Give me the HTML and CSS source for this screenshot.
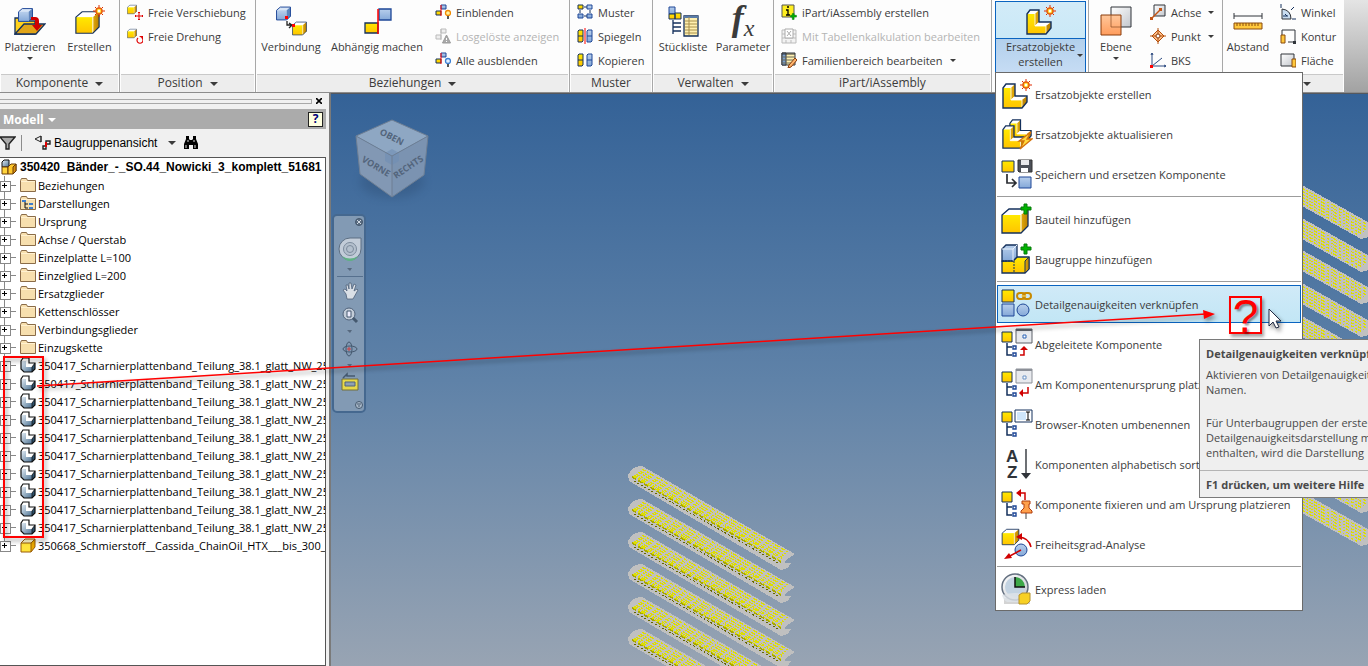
FILE: index.html
```html
<!DOCTYPE html>
<html lang="de">
<head>
    <meta charset="UTF-8">
    <meta name="viewport" content="width=device-width, initial-scale=1.0">
    <title>Modell - Baugruppenansicht</title>
    <link rel="stylesheet" href="styles.css">
</head>
<body>

    <!-- Symbole -->
    <svg class="sprite" aria-hidden="true">
        <defs>
            <linearGradient id="gold" x1="0" y1="0" x2="0" y2="1"><stop offset="0" stop-color="#ffe900"/><stop offset="1" stop-color="#ffc400"/></linearGradient>
            <linearGradient id="side" x1="0" y1="0" x2="1" y2="0"><stop offset="0" stop-color="#e2a90a"/><stop offset="1" stop-color="#b98000"/></linearGradient>
            <linearGradient id="blue" x1="0" y1="0" x2="0" y2="1"><stop offset="0" stop-color="#b8cfec"/><stop offset="1" stop-color="#84a8d8"/></linearGradient>
            <linearGradient id="steel" x1="0" y1="0" x2="1" y2="1"><stop offset="0" stop-color="#e4edf5"/><stop offset="1" stop-color="#4d7394"/></linearGradient>
            <linearGradient id="orange" x1="0" y1="0" x2="0" y2="1"><stop offset="0" stop-color="#ffc79b"/><stop offset="1" stop-color="#ff9c5c"/></linearGradient>
            <linearGradient id="grey" x1="0" y1="0" x2="1" y2="1"><stop offset="0" stop-color="#fff"/><stop offset="1" stop-color="#c2c6cc"/></linearGradient>
        </defs>
        <symbol id="spark" viewBox="0 0 12 12">
            <path d="M6 0v12M0 6h12M2 2l8 8M10 2l-8 8" stroke="#e02a00" stroke-width="1"/>
            <circle cx="6" cy="6" r="3" fill="#ffe23c" stroke="#e8600a" stroke-width="1.5"/>
            <circle cx="6" cy="6" r="1.2" fill="#fff"/>
        </symbol>
        <symbol id="box" viewBox="0 0 28 28">
            <path d="M1 8l7-6h19v17l-7 7H1z" fill="#fff"/>
            <path d="M1 8h19v18H1z" fill="url(#gold)"/>
            <path d="M20 8l7-6v17l-7 7z" fill="url(#side)"/>
            <path d="M20 8v18" stroke="#fff"/>
            <path d="M1 8l7-6h19v17l-7 7H1z" fill="none" stroke="#14305c" stroke-width="1.3"/>
        </symbol>
        <symbol id="bluebox" viewBox="0 0 28 28">
            <path d="M1 8l7-6h19v17l-7 7H1z" fill="#d8e5f6"/>
            <path d="M1 8h19v18H1z" fill="url(#blue)"/>
            <path d="M20 8l7-6v17l-7 7z" fill="#5f86be"/>
            <path d="M1 8l7-6h19v17l-7 7H1z" fill="none" stroke="#1e4797" stroke-width="1.8"/>
        </symbol>
        <symbol id="ell" viewBox="0 0 26 26">
            <path d="M1 5l3-4h9v12h12v6l-5 6H1z" fill="#fff"/>
            <path d="M1 5h8v12h11v8H1z" fill="url(#gold)"/>
            <path d="M9 5l4-4v12l-4 4zM20 17l5-4v6l-5 6z" fill="url(#side)"/>
            <path d="M9 5v12h11v8M9 17l4-4" fill="none" stroke="#fff" stroke-width=".8"/>
            <path d="M1 5l3-4h9v12h12v6l-5 6H1z" fill="none" stroke="#14305c" stroke-width="1.4"/>
        </symbol>
        <symbol id="i-place" viewBox="0 0 32 32">
            <path d="M1 13h9l3 3h8v13H1z" fill="#ffd21c" stroke="#14305c" stroke-width="1.3"/>
            <path d="M1 29l9-10h21l-9 10z" fill="#e0a418" stroke="#14305c" stroke-width="1.3"/>
            <use href="#bluebox" x="4" y="2" width="15" height="16"/>
            <path d="M17 12h4q4 0 4 4v4h3l-5 6-5-6h3v-5h-4z" fill="#d00000"/>
        </symbol>
        <symbol id="i-create" viewBox="0 0 32 32">
            <use href="#box" x="1" y="5" width="25" height="25"/>
            <use href="#spark" x="19" y="0" width="12" height="12"/>
        </symbol>
        <symbol id="i-joint" viewBox="0 0 32 32">
            <use href="#bluebox" x="1" y="1" width="15" height="15"/>
            <use href="#box" x="17" y="16" width="15" height="15"/>
            <path d="M12 16v4h4M14 18l3 2-3 3" fill="none" stroke="#222" stroke-width="1.3"/>
            <path d="M10 11h3v3h-3zM17 19h3v3h-3z" fill="#f00"/>
        </symbol>
        <symbol id="i-constrain" viewBox="0 0 32 32">
            <path d="M18 4h12v11H18z" fill="url(#blue)" stroke="#1e4797" stroke-width="1.3"/>
            <path d="M4 18h13v10H4z" fill="url(#gold)" stroke="#14305c" stroke-width="1.3"/>
            <path d="M17 4v25" stroke="#f00" stroke-width="1.5"/>
        </symbol>
        <symbol id="i-bom" viewBox="0 0 32 32">
            <path d="M2 2h6v7H2z" fill="url(#blue)" stroke="#1e4797"/>
            <path d="M2 9h6v5H2zM8 8h6v6H8z" fill="url(#gold)" stroke="#14305c"/>
            <path d="M6 15v14M6 18h8M6 22h8M6 26h8" stroke="#14305c" stroke-width="1.3"/>
            <path d="M17 11h14v20H17z" fill="#fff0b0" stroke="#14305c" stroke-width="1.3"/>
            <path d="M17 12h14" stroke="#5a7ca8" stroke-width="2"/>
            <path d="M18 16h12M18 19h12M18 22h12M18 25h12M18 28h12M22 12v18" stroke="#a8904c"/>
        </symbol>
        <symbol id="i-sub" viewBox="0 0 32 32">
            <use href="#ell" x="1" y="5" width="26" height="26"/>
            <use href="#spark" x="19" y="1" width="12" height="12"/>
        </symbol>
        <symbol id="i-subup" viewBox="0 0 32 32">
            <use href="#ell" x="8" y="1" width="23" height="23"/>
            <use href="#ell" x="1" y="7" width="24" height="24"/>
            <path d="M30 14l-12 9h5l-4 8 12-10h-5z" fill="#ffd93c" stroke="#d4720c" stroke-width="1.3"/>
        </symbol>
        <symbol id="i-savereplace" viewBox="0 0 32 32">
            <path d="M1 3h12v11H1z" fill="url(#gold)" stroke="#14305c"/>
            <path d="M17 2h14v12H18l-1-1z" fill="#4c5058" stroke="#333"/>
            <path d="M20 2h8v5h-8z" fill="#e8e8ea"/><path d="M20 10h7v4h-7z" fill="#fff"/>
            <path d="M6 16v9h9M11 21l4 4-4 4" fill="none" stroke="#2b2e33" stroke-width="1.7"/>
            <path d="M18 19h12v11H18z" fill="url(#blue)" stroke="#1e4797"/>
        </symbol>
        <symbol id="plus" viewBox="0 0 12 12"><path d="M4 1h3v3h4v3H7v4H4V7H1V4h3z" fill="#00b400" stroke="#067a0a"/></symbol>
        <symbol id="i-addpart" viewBox="0 0 32 32">
            <use href="#box" x="0" y="4" width="28" height="28"/>
            <use href="#plus" x="19" y="0" width="12" height="12"/>
        </symbol>
        <symbol id="i-addasm" viewBox="0 0 32 32">
            <path d="M13 17l3-3h12v12l-4 4H1V18z" fill="url(#gold)" stroke="#14305c" stroke-width="1.3"/>
            <path d="M24 18l4-4v12l-4 4z" fill="url(#side)" stroke="#14305c"/>
            <path d="M1 6l4-4h11v12l-4 4H1z" fill="url(#blue)" stroke="#14305c" stroke-width="1.3"/>
            <path d="M1 6h11v12M12 6l4-4" stroke="#e8f0fa" fill="none"/>
            <path d="M1 18h12v12" stroke="#14305c" stroke-dasharray="2 1" fill="none"/>
            <use href="#plus" x="19" y="0" width="12" height="12"/>
        </symbol>
        <symbol id="i-linklod" viewBox="0 0 32 32">
            <path d="M1 2h12v12H1z" fill="url(#gold)" stroke="#14305c"/>
            <path d="M1 16h12v12H1z" fill="url(#blue)" stroke="#1e4797"/>
            <circle cx="22" cy="22" r="6" fill="url(#blue)" stroke="#1e4797"/>
            <rect x="16" y="5" width="8" height="6" rx="3" fill="none" stroke="#c88a00" stroke-width="2"/>
            <rect x="22" y="5" width="8" height="6" rx="3" fill="none" stroke="#c88a00" stroke-width="2"/>
            <path d="M20 8h6" stroke="#ffe27a"/>
        </symbol>
        <symbol id="treebase" viewBox="0 0 32 32">
            <path d="M1 4h10v10H1z" fill="url(#gold)" stroke="#14305c"/>
            <path d="M6 15v12h5M6 19h5" fill="none" stroke="#14305c" stroke-width="1.5"/>
            <path d="M12 18h3v3h-3zM12 25h3v3h-3z" fill="#fff" stroke="#1e4797" stroke-width="1.4"/>
        </symbol>
        <symbol id="i-derived" viewBox="0 0 32 32">
            <use href="#treebase" width="32" height="32"/>
            <path d="M15 1h16v14H15z" fill="#e8eaee" stroke="#5c6068"/><path d="M15 2h16" stroke="#5c6068" stroke-width="2"/>
            <path d="M22 7h3v3h-3z" fill="#fff" stroke="#2a62b4"/>
            <path d="M19 27h4v-8" fill="none" stroke="#d00000" stroke-width="1.5"/><path d="M19 22l4-4 4 4z" fill="#d00000"/>
        </symbol>
        <symbol id="i-origin" viewBox="0 0 32 32">
            <use href="#treebase" width="32" height="32"/>
            <path d="M15 1h16v14H15z" fill="#e8eaee" stroke="#8c9098"/><path d="M15 2h16" stroke="#8c9098" stroke-width="2"/>
            <path d="M22 8h3v3h-3z" fill="#fff" stroke="#6a92c4"/>
            <path d="M27 19v6h-8" fill="none" stroke="#d00000" stroke-width="1.5"/><path d="M22 21v8l-4-4z" fill="#d00000"/>
        </symbol>
        <symbol id="i-rename" viewBox="0 0 32 32">
            <use href="#treebase" width="32" height="32"/>
            <path d="M14 2h17v12H14z" fill="#fff" stroke="#14305c"/><path d="M16 4h9v8h-9z" fill="#cfe6fa"/>
            <path d="M25 4h4M27 4v8M25 12h4" stroke="#000"/>
        </symbol>
        <symbol id="i-pin" viewBox="0 0 32 32">
            <use href="#treebase" width="32" height="32"/>
            <path d="M24 12V5h-6" fill="none" stroke="#d00000" stroke-width="1.5"/><path d="M20 1v8l-5-4z" fill="#d00000"/>
            <path d="M21 13h8v3h-1v4l3 3v2H20v-2l3-3v-4h-2z" fill="#ffa04c" stroke="#b03c0c"/><path d="M25 25v6" stroke="#444"/>
        </symbol>
        <symbol id="i-sort" viewBox="0 0 32 32">
            <path d="M25 1v25" stroke="#30343a" stroke-width="1.4"/><path d="M20 25h10l-5 6z" fill="#30343a"/>
        </symbol>
        <symbol id="i-dof" viewBox="0 0 32 32">
            <use href="#box" x="0" y="0" width="19" height="18"/>
            <circle cx="20" cy="22" r="6" fill="url(#blue)" stroke="#1e4797"/>
            <path d="M30 19q-2-9-12-10" fill="none" stroke="#d00000" stroke-width="1.5"/><path d="M21 5l-6 4 6 3z" fill="#d00000"/>
            <path d="M20 22L7 29" stroke="#d00000" stroke-width="1.5"/><path d="M8 25l3 5-8 1z" fill="#d00000"/>
        </symbol>
        <symbol id="i-express" viewBox="0 0 32 32">
            <path d="M3 25h26v6H3z" fill="#d4d4d4"/>
            <circle cx="14" cy="14" r="13" fill="url(#grey)" stroke="#647080" stroke-width="1.5"/>
            <circle cx="14" cy="14" r="10" fill="#c3d3e2"/>
            <path d="M14 14V4a10 10 0 0 1 10 10z" fill="#3ca848"/>
            <path d="M14 4v10h10" fill="none" stroke="#111" stroke-width="1.5"/>
            <path d="M1 22q13-4 26 0v7H6q-4-2-5-7z" fill="#dfe3e8" opacity=".8"/>
            <path d="M18 22l3-2h8v8l-3 3h-8z" fill="#f7d024" stroke="#b4922c"/>
        </symbol>
        <symbol id="i-plane" viewBox="0 0 32 32">
            <path d="M11 2h20v20H11z" fill="url(#grey)" stroke="#30343a"/>
            <path d="M1 10h20v20H1z" fill="url(#orange)" stroke="#8a3c0c"/>
            <path d="M11 10v12h10" fill="none" stroke="#8a4a24" opacity=".7"/>
        </symbol>
        <symbol id="i-ruler" viewBox="0 0 32 32">
            <path d="M2 11h28M2 8v6M30 8v6" stroke="#30343a" fill="none"/>
            <path d="M2 18h28v6H2z" fill="#ffc83c" stroke="#8a4a0c"/>
            <path d="M5 18v3M8 18v3M11 18v3M14 18v3M17 18v3M20 18v3M23 18v3M26 18v3" stroke="#8a4a0c"/>
        </symbol>
        <symbol id="s-move" viewBox="0 0 16 16">
            <use href="#box" width="10" height="11"/>
            <path d="M12 8v8M8 12h8M11 9l1-1 1 1M11 15l1 1 1-1M9 11l-1 1 1 1M15 11l1 1-1 1" fill="none" stroke="#e00000"/>
        </symbol>
        <symbol id="s-rotate" viewBox="0 0 16 16">
            <use href="#box" width="10" height="11"/>
            <path d="M11 10a3 3 0 1 0 4 0" fill="none" stroke="#e00000" stroke-width="1.2"/><path d="M12 8h4v3z" fill="#e00000"/>
        </symbol>
        <symbol id="flags" viewBox="0 0 16 16">
            <path d="M6 1h5v4H6z" fill="url(#blue)" stroke="#1e4797"/><path d="M1 7h5v4H1z" fill="url(#gold)" stroke="#14305c"/>
            <path d="M6 1v11" stroke="#f00"/>
        </symbol>
        <symbol id="s-show" viewBox="0 0 16 16"><use href="#flags" width="16" height="16"/><circle cx="13" cy="9" r="2.5" fill="#fff2a0" stroke="#f08a00" stroke-width="1.3"/><path d="M12 12h2v3h-2z" fill="#555"/></symbol>
        <symbol id="s-hide" viewBox="0 0 16 16"><use href="#flags" width="16" height="16"/><circle cx="13" cy="9" r="2.5" fill="#e4f0ff" stroke="#3c80d4" stroke-width="1.3"/><path d="M12 12h2v3h-2z" fill="#555"/></symbol>
        <symbol id="s-sick" viewBox="0 0 16 16"><path d="M6 1h5v4H6zM1 7h5v4H1zM6 1v11" fill="#eee" stroke="#bbb"/><path d="M11.500 7l4 8h-8z" fill="#aaa" stroke="#999"/><path d="M11.500 10v2M11.500 13v1" stroke="#fff"/></symbol>
        <symbol id="s-pattern" viewBox="0 0 16 16">
            <path d="M1 1h5v4H1z" fill="url(#gold)" stroke="#14305c"/>
            <path d="M10 1h5v4h-5zM1 10h5v4H1zM10 10h5v4h-5z" fill="url(#blue)" stroke="#1e4797"/><path d="M7 3h3M3 6v3M7 12h3M13 6v3" stroke="#14305c"/>
        </symbol>
        <symbol id="s-copy" viewBox="0 0 16 16">
            <path d="M1 3l1-1h4v11l-1 1H1zM1 8h5" fill="url(#gold)" stroke="#14305c"/>
            <path d="M10 3l1-1h4v11l-1 1h-4zM10 8h5" fill="url(#blue)" stroke="#1e4797"/>
        </symbol>
        <symbol id="s-mirror" viewBox="0 0 16 16"><use href="#s-copy" width="16" height="16"/><path d="M8 0v16" stroke="#f00"/></symbol>
        <symbol id="s-ipart" viewBox="0 0 16 16">
            <path d="M1 1h12v12H1z" fill="#ffee20" stroke="#555"/><path d="M5 6h2v5M5 11h4M6 3h2" stroke="#000" fill="none" stroke-width="1.3"/>
            <use href="#plus" x="9" y="9" width="7" height="7"/>
        </symbol>
        <symbol id="s-sheet" viewBox="0 0 16 16">
            <path d="M1 2h14v13H1zM1 6h14M1 10h14M5 12v3M10 12v3" fill="#f2f2f2" stroke="#bbb"/><path d="M4 1h8v9H4z" fill="#fff" stroke="#aaa"/><path d="M6 3l4 5M10 3L6 8" stroke="#aaa"/>
        </symbol>
        <symbol id="s-family" viewBox="0 0 16 16">
            <path d="M1 1h13v12H1z" fill="#fff0b0" stroke="#30343a"/><path d="M1 1h4v12H1zM1 2h13" fill="#7ca0cc" stroke="#30343a"/>
            <path d="M1 5h13M1 8h13M1 11h13" stroke="#686858"/><path d="M14 6l2 2-6 7-3 1 1-3z" fill="#ffb46c" stroke="#8a3c0c"/>
        </symbol>
        <symbol id="s-axis" viewBox="0 0 16 16"><path d="M4 1h11v11H4z" fill="url(#grey)" stroke="#30343a"/><path d="M1 15L11 5" stroke="#c45414" stroke-width="1.5"/><path d="M0 13h3v3H0zM9 4h3v3H9z" fill="#c45414"/></symbol>
        <symbol id="s-point" viewBox="0 0 16 16"><path d="M8 2l6 6-6 6-6-6z" fill="#ffc08c" stroke="#b4500c"/><path d="M8 0v16M0 8h16" stroke="#b4500c"/><circle cx="8" cy="8" r="2" fill="#fff" stroke="#8a3c0c"/></symbol>
        <symbol id="s-ucs" viewBox="0 0 16 16"><path d="M2 1v13h14M2 14L12 6M1 3l1-2 1 2M14 13l2 1-2 1" fill="none" stroke="#2c4a80"/><path d="M0 13h3v3H0z" fill="#f00"/></symbol>
        <symbol id="s-angle" viewBox="0 0 16 16"><path d="M2 15V5q9 1 9 10z" fill="#c8dcf0" stroke="#30343a"/><path d="M1 0v4M5 10l2 2M11 6l3-3M12 15h4M3 12h5" stroke="#14305c"/></symbol>
        <symbol id="s-loop" viewBox="0 0 16 16"><path d="M2 8V2h13v12H8" fill="none" stroke="#30343a"/><path d="M1 7h4v8H1z" fill="#ffc83c" stroke="#8a4a0c"/><path d="M13 13h3v3h-3z" fill="#30343a"/></symbol>
        <symbol id="s-area" viewBox="0 0 16 16"><path d="M1 2h13v12H1z" fill="url(#grey)" stroke="#30343a"/><path d="M12 7h4v8h-4z" fill="#ffc83c" stroke="#8a4a0c"/></symbol>
        <symbol id="t-folder" viewBox="0 0 16 16"><path d="M.5 3.500l1-2h5l1 2h8v11H.5z" fill="#f7dfae" stroke="#8a6c48"/><path d="M1 4.500h14" stroke="#fff1d0"/></symbol>
        <symbol id="t-repr" viewBox="0 0 16 16"><use href="#t-folder" width="16" height="16"/><path d="M2 5h4v2H2zM9 8h4v2H9zM9 12h4v2H9z" fill="#3c7ccc"/><path d="M5 7v6h3M5 9h3" stroke="#111" fill="none"/></symbol>
        <symbol id="t-part" viewBox="0 0 16 16">
            <path d="M1 4l2-3h5l1 1v4h6v6l-3 3H4l-3-3z" fill="#fff"/>
            <path d="M1 4h5v6h6v5H4l-3-3z" fill="url(#steel)"/><path d="M12 10l3-4v6l-3 3z" fill="#2c506c"/>
            <path d="M1 4l2-3h6v5h6v6l-3 3H4l-3-3z" fill="none" stroke="#111" stroke-width="1.2"/>
            <path d="M12 10v5M12 10l3-4" stroke="#111" stroke-width=".8"/>
        </symbol>
        <symbol id="t-box" viewBox="0 0 16 16"><path d="M1 6l4-4h10v8l-4 5H1z" fill="#fff7c8"/><path d="M1 6h10v9H1z" fill="#ffe43c"/><path d="M11 6l4-4v8l-4 5z" fill="#e8a800"/><path d="M1 6l4-4h10v8l-4 5H1zM1 6h10v9M11 6l4-4" fill="none" stroke="#9a5c08"/></symbol>
        <symbol id="t-asm" viewBox="0 0 16 16">
            <path d="M1 3l2-2h5v6l-1 1H1z" fill="url(#steel)" stroke="#111"/>
            <path d="M1 8h6v7H1z" fill="#ffd43c" stroke="#6a3c08"/><path d="M7 8l3-3h5v7l-3 3H7z" fill="#ffc82c" stroke="#6a3c08"/><path d="M12 8l3-3v7l-3 3z" fill="#d48c10" stroke="#6a3c08"/>
        </symbol>
    </svg>

    <header class="ribbon">
        <section class="panel komponente">
            <div class="panel-body">
                <button class="big"><svg><use href="#i-place"/></svg>Platzieren<i class="arrow small-arrow"></i></button>
                <button class="big"><svg><use href="#i-create"/></svg>Erstellen</button>
            </div>
            <div class="panel-title">Komponente<i class="arrow"></i></div>
        </section>
        <section class="panel position">
            <div class="panel-body">
                <div class="stack">
                    <button class="small"><svg><use href="#s-move"/></svg>Freie Verschiebung</button>
                    <button class="small"><svg><use href="#s-rotate"/></svg>Freie Drehung</button>
                </div>
            </div>
            <div class="panel-title">Position<i class="arrow"></i></div>
        </section>
        <section class="panel beziehungen">
            <div class="panel-body">
                <button class="big"><svg><use href="#i-joint"/></svg>Verbindung</button>
                <button class="big"><svg><use href="#i-constrain"/></svg>Abhängig machen</button>
                <div class="stack">
                    <button class="small"><svg><use href="#s-show"/></svg>Einblenden</button>
                    <button class="small" disabled><svg><use href="#s-sick"/></svg>Losgelöste anzeigen</button>
                    <button class="small"><svg><use href="#s-hide"/></svg>Alle ausblenden</button>
                </div>
            </div>
            <div class="panel-title">Beziehungen<i class="arrow"></i></div>
        </section>
        <section class="panel muster">
            <div class="panel-body">
                <div class="stack">
                    <button class="small"><svg><use href="#s-pattern"/></svg>Muster</button>
                    <button class="small"><svg><use href="#s-mirror"/></svg>Spiegeln</button>
                    <button class="small"><svg><use href="#s-copy"/></svg>Kopieren</button>
                </div>
            </div>
            <div class="panel-title">Muster</div>
        </section>
        <section class="panel verwalten">
            <div class="panel-body">
                <button class="big"><svg><use href="#i-bom"/></svg>Stückliste</button>
                <button class="big"><span class="fx">f<sub>x</sub></span>Parameter</button>
            </div>
            <div class="panel-title">Verwalten<i class="arrow"></i></div>
        </section>
        <section class="panel ipart">
            <div class="panel-body">
                <div class="stack">
                    <button class="small"><svg><use href="#s-ipart"/></svg>iPart/iAssembly erstellen</button>
                    <button class="small" disabled><svg><use href="#s-sheet"/></svg>Mit Tabellenkalkulation bearbeiten</button>
                    <button class="small"><svg><use href="#s-family"/></svg>Familienbereich bearbeiten<i class="arrow small-arrow"></i></button>
                </div>
            </div>
            <div class="panel-title">iPart/iAssembly</div>
        </section>
        <section class="panel ersatz">
            <button class="split" aria-expanded="true">
                <svg><use href="#i-sub"/></svg>
                <span>Ersatzobjekte<br>erstellen<i class="arrow small-arrow"></i></span>
            </button>

            <div class="menu" role="menu">
                <button role="menuitem"><svg><use href="#i-sub"/></svg>Ersatzobjekte erstellen</button>
                <button role="menuitem"><svg><use href="#i-subup"/></svg>Ersatzobjekte aktualisieren</button>
                <button role="menuitem"><svg><use href="#i-savereplace"/></svg>Speichern und ersetzen Komponente</button>
                <hr>
                <button role="menuitem"><svg><use href="#i-addpart"/></svg>Bauteil hinzufügen</button>
                <button role="menuitem"><svg><use href="#i-addasm"/></svg>Baugruppe hinzufügen</button>
                <hr>
                <button role="menuitem" class="active"><svg><use href="#i-linklod"/></svg>Detailgenauigkeiten verknüpfen</button>
                <button role="menuitem"><svg><use href="#i-derived"/></svg>Abgeleitete Komponente</button>
                <button role="menuitem"><svg><use href="#i-origin"/></svg>Am Komponentenursprung platzieren</button>
                <button role="menuitem"><svg><use href="#i-rename"/></svg>Browser-Knoten umbenennen</button>
                <button role="menuitem"><svg viewBox="0 0 32 32"><text x="5" y="14" class="az">A</text><text x="6" y="30" class="az">Z</text><use href="#i-sort" width="32" height="32"/></svg>Komponenten alphabetisch sortieren</button>
                <button role="menuitem"><svg><use href="#i-pin"/></svg>Komponente fixieren und am Ursprung platzieren</button>
                <button role="menuitem"><svg><use href="#i-dof"/></svg>Freiheitsgrad-Analyse</button>
                <hr>
                <button role="menuitem"><svg><use href="#i-express"/></svg>Express laden</button>
            </div>
        </section>
        <section class="panel ebene">
            <div class="panel-body">
                <button class="big"><svg><use href="#i-plane"/></svg>Ebene<i class="arrow small-arrow"></i></button>
                <div class="stack">
                    <button class="small"><svg><use href="#s-axis"/></svg>Achse<i class="arrow small-arrow"></i></button>
                    <button class="small"><svg><use href="#s-point"/></svg>Punkt<i class="arrow small-arrow"></i></button>
                    <button class="small"><svg><use href="#s-ucs"/></svg>BKS</button>
                </div>
            </div>
            <div class="panel-title"></div>
        </section>
        <section class="panel messen">
            <div class="panel-body">
                <button class="big"><svg><use href="#i-ruler"/></svg>Abstand</button>
                <div class="stack">
                    <button class="small"><svg><use href="#s-angle"/></svg>Winkel</button>
                    <button class="small"><svg><use href="#s-loop"/></svg>Kontur</button>
                    <button class="small"><svg><use href="#s-area"/></svg>Fläche</button>
                </div>
            </div>
            <div class="panel-title"><i class="arrow"></i></div>
        </section>
    </header>

    <main>
        <aside class="browser">
            <div class="grip"><span></span><button aria-label="Schließen"><svg viewBox="0 0 6 6"><path d="M0 0l6 6M6 0L0 6" stroke="#000" stroke-width="1.6"/></svg></button></div>
            <div class="browser-head">
                <span>Modell<i class="arrow"></i></span>
                <button aria-label="Hilfe">?</button>
            </div>
            <div class="browser-tools">
                <svg viewBox="0 0 16 16"><path d="M0 2h15L9 9v5H6V9z" fill="#aaa" stroke="#222" stroke-width="1.4"/></svg>
                <button class="view">
                    <svg viewBox="0 0 16 16"><path d="M0 4l6-3v6zM6 1v6" fill="none" stroke="#222"/><path d="M8 11h3v3H8zM11 6h4v3h-4z" fill="none" stroke="#222" stroke-width="1.4"/><path d="M11 7v5" stroke="#e00000" stroke-width="2"/></svg>
                    Baugruppenansicht<i class="arrow"></i>
                </button>
                <svg viewBox="0 0 16 16"><path d="M3 1h3v3l1 1h2l1-1V1h3v3l2 5v5h-5v-4H6v4H1V9l2-5z" fill="#000"/><path d="M3 10v3M12 10v3M5 5v2M11 5v2" stroke="#ddd"/></svg>
            </div>
            <ul class="tree">
                <li class="root"><svg><use href="#t-asm"/></svg>350420_Bänder_-_SO.44_Nowicki_3_komplett_51681</li>
                <li><svg><use href="#t-folder"/></svg>Beziehungen</li>
                <li><svg><use href="#t-repr"/></svg>Darstellungen</li>
                <li><svg><use href="#t-folder"/></svg>Ursprung</li>
                <li><svg><use href="#t-folder"/></svg>Achse / Querstab</li>
                <li><svg><use href="#t-folder"/></svg>Einzelplatte L=100</li>
                <li><svg><use href="#t-folder"/></svg>Einzelglied L=200</li>
                <li><svg><use href="#t-folder"/></svg>Ersatzglieder</li>
                <li><svg><use href="#t-folder"/></svg>Kettenschlösser</li>
                <li><svg><use href="#t-folder"/></svg>Verbindungsglieder</li>
                <li><svg><use href="#t-folder"/></svg>Einzugskette</li>
                <li><svg><use href="#t-part"/></svg>350417_Scharnierplattenband_Teilung_38.1_glatt_NW_250</li>
                <li><svg><use href="#t-part"/></svg>350417_Scharnierplattenband_Teilung_38.1_glatt_NW_250</li>
                <li><svg><use href="#t-part"/></svg>350417_Scharnierplattenband_Teilung_38.1_glatt_NW_250</li>
                <li><svg><use href="#t-part"/></svg>350417_Scharnierplattenband_Teilung_38.1_glatt_NW_250</li>
                <li><svg><use href="#t-part"/></svg>350417_Scharnierplattenband_Teilung_38.1_glatt_NW_250</li>
                <li><svg><use href="#t-part"/></svg>350417_Scharnierplattenband_Teilung_38.1_glatt_NW_250</li>
                <li><svg><use href="#t-part"/></svg>350417_Scharnierplattenband_Teilung_38.1_glatt_NW_250</li>
                <li><svg><use href="#t-part"/></svg>350417_Scharnierplattenband_Teilung_38.1_glatt_NW_250</li>
                <li><svg><use href="#t-part"/></svg>350417_Scharnierplattenband_Teilung_38.1_glatt_NW_250</li>
                <li><svg><use href="#t-part"/></svg>350417_Scharnierplattenband_Teilung_38.1_glatt_NW_250</li>
                <li><svg><use href="#t-box"/></svg>350668_Schmierstoff__Cassida_ChainOil_HTX___bis_300_C</li>
            </ul>
        </aside>

        <div class="viewport">
            <!-- Scharnierplatten -->
            <svg class="scene" viewBox="331 94 1038 573">
                <defs>
                    <g id="plate">
                        <path d="M0 9l4-6 7-3h3l153 88-9 6-1 3h6l-3 5-7 2L1 15z" fill="#c0c0c0"/>
                        <path d="M14 3l146 83M12 5l146 83M10 6l146 84M8 8l147 84M6 9l148 84M5 10l148 85" stroke="#dede00" stroke-width="1.2" stroke-dasharray="4 2 2 1 5 2" fill="none"/>
                        <path d="M4 11l149 85" stroke="#a8a800" stroke-width="1.5" stroke-dasharray="5 2"/>
                        <path d="M6 15l146 83" stroke="#666600" stroke-dasharray="2 2"/>
                    </g>
                    <g id="plate-end">
                        <path d="M0 0l80 45v4l-21 5L0 21z" fill="#c0c0c0"/>
                        <path d="M0 3l68 38M0 6l66 37M0 9l64 36M0 12l62 35M0 15l60 34M0 18l56 32" stroke="#dede00" stroke-width="1.2" stroke-dasharray="3 2 2 1 4 2" fill="none"/>
                    </g>
                </defs>
                <use href="#plate" x="628" y="466"/>
                <use href="#plate" x="628" y="499"/>
                <use href="#plate" x="628" y="532"/>
                <use href="#plate" x="628" y="564"/>
                <use href="#plate" x="628" y="597"/>
                <use href="#plate" x="628" y="629"/>
                <use href="#plate-end" x="1302" y="185"/>
                <use href="#plate-end" x="1302" y="218"/>
                <use href="#plate-end" x="1302" y="250"/>
                <use href="#plate-end" x="1302" y="283"/>
                <use href="#plate-end" x="1302" y="316"/>
                <use href="#plate-end" x="1302" y="459"/>
                <use href="#plate-end" x="1302" y="492"/>
            </svg>

            <svg class="viewcube" viewBox="0 0 90 90">
                <ellipse cx="43" cy="66" rx="32" ry="16" fill="#28466a" opacity=".3" class="shade"/>
                <path d="M43 4l36 16-36 20L7 20z" fill="#8ea7c3"/>
                <path d="M7 20l36 20v41L11 58z" fill="#8298b4"/>
                <path d="M79 20L43 40v41l32-22z" fill="#7b93b1"/>
                <path d="M43 33l7 4v8l-7 4-7-4v-8z" fill="#6f8db4" opacity=".6"/>
                <path d="M43 4l36 16-4 39-32 22-32-23L7 20zM7 20l36 20 36-20M43 40v41" fill="none" stroke="#6e7f94"/>
                <g>
                    <text transform="rotate(27 30 18)" x="30" y="18">OBEN</text>
                    <text transform="rotate(31 12 45)" x="12" y="45">VORNE</text>
                    <text transform="rotate(-34 47 63)" x="47" y="63">RECHTS</text>
                </g>
            </svg>

            <div class="navbar">
                <svg viewBox="0 0 32 196">
                    <g fill="none" stroke="#45596f">
                        <circle cx="25" cy="6" r="3.500" fill="#5b6d81"/><path d="M23 4l4 4M27 4l-4 4" stroke="#cfd8e2"/>
                        <path d="M16 22h11v11a11 11 0 1 1-11-11z" fill="#c2ccd8" stroke="#5d6f83"/>
                        <path d="M8 40q8 5 16 0-3 5-8 5t-8-5z" fill="#60b284" stroke="none"/>
                        <circle cx="16" cy="33" r="6.500" fill="#b4c0cd" stroke="#7c8b9c"/><circle cx="16" cy="33" r="3.500" stroke="#7c8b9c"/>
                        <path d="M3 60.500h26" stroke="#56708e"/>
                        <path d="M12 78l-3-4 2-1 2 2-1-6h2l1 4v-6h2l1 6 2-5 2 1-2 6 3-2 1 1-5 9h-6z" fill="#d9dfe6" stroke="#50627a" stroke-width=".8"/>
                        <circle cx="15" cy="98" r="6" fill="#c2ccd8" stroke="#50627a"/><path d="M13 95h4v6h-4z" fill="#eef"/><path d="M19 102l4 4" stroke-width="3"/>
                        <ellipse cx="16" cy="133" rx="7" ry="3"/><ellipse cx="15" cy="133" rx="3" ry="7"/><path d="M13 133h4M15 131v4" stroke="#d04040"/>
                        <path d="M8 163h16v11H8z" fill="#e8d848" stroke="#736f3a"/><path d="M11 166h10v4H11z" fill="#8fa0b4" stroke="#50627a"/><path d="M9 162l4-4v2h8" stroke-width="1.5"/>
                        <circle cx="25" cy="189" r="3.500" fill="#a9b8c8"/><path d="M23 188h4M24 190h2"/>
                    </g>
                    <path d="M13 52h5l-2 3zM13 114h5l-2 3zM13 148h5l-2 3z" fill="#56687d"/>
                </svg>
            </div>
        </div>
    </main>

    <div class="tooltip" role="tooltip">
        <h2>Detailgenauigkeiten verknüpfen</h2>
        <p>Aktivieren von Detailgenauigkeiten<br>Namen.</p>
        <p>Für Unterbaugruppen der ersten<br>Detailgenauigkeitsdarstellung mit<br>enthalten, wird die Darstellung</p>
        <footer>F1 drücken, um weitere Hilfe</footer>
    </div>

    <!-- Markierungen -->
    <svg class="marks" viewBox="0 0 1368 666">
        <rect x="4" y="357" width="39" height="180" fill="none" stroke="#f00" stroke-width="2"/>
        <path d="M37 386L1206 314" stroke="#f00" stroke-width="1.5"/>
        <path d="M1203 310l12 4-11 5z" fill="#f00"/>
        <path d="M1269 309v17l4-4 3 6 3-1-3-6h5z" fill="#fff" stroke="#222b44"/>
    </svg>
    <div class="question">?</div>

</body>
</html>
```
FILE: styles.css
```css
* {
    box-sizing: border-box;
}
body {
    margin: 0;
    height: 100vh;
    display: flex;
    flex-direction: column;
    position: relative;
    overflow: hidden;
    font-family: "Open Sans", "Noto Sans", sans-serif;
    font-size: 11px;
    color: #3b3b3b;
    background: #f0f0f0;
}
button {
    font: inherit;
    color: inherit;
    background: none;
    border: none;
    padding: 0;
    white-space: nowrap;
}
.sprite {
    position: absolute;
    width: 0;
    height: 0;
}
.arrow {
    display: inline-block;
    border: 4px solid transparent;
    border-top-color: #3b3b3b;
    border-bottom: none;
    margin-left: 7px;
    vertical-align: middle;
}
.small-arrow {
    border-width: 3px;
    border-bottom: none;
}

/* Ribbon */
.ribbon {
    display: flex;
    flex: none;
    background: linear-gradient(#e4e4e4, #a2a2a2);
    border-bottom: 1px solid #8c8c8c;
    height: 93px;
}
.panel {
    flex: none;
    display: flex;
    flex-direction: column;
    background: #fdfdfd;
    border-right: 1px solid #a8a8a8;
}
.panel-body {
    flex: 1;
    display: grid;
}
.panel-title {
    height: 18px;
    line-height: 16px;
    margin: 0 1px;
    text-align: center;
    font-size: 12px;
    background: #ededed;
    border-top: 1px solid #c9c9c9;
}
.komponente { width: 120px; }
.position { width: 136px; }
.beziehungen { width: 314px; }
.muster { width: 83px; }
.verwalten { width: 121px; }
.ipart { width: 218px; }
.ersatz { width: 97px; }
.ebene { width: 134px; }
.messen { width: 121px; border-right: none; }
.komponente .panel-body,
.verwalten .panel-body { grid-template-columns: 60px 1fr; }
.beziehungen .panel-body { grid-template-columns: 70px 102px 1fr; }
.ebene .panel-body { grid-template-columns: 54px 1fr; }
.messen .panel-body { grid-template-columns: 50px 1fr; }
.messen .panel-title { text-align: right; padding-right: 32px; }

.big {
    display: flex;
    flex-direction: column;
    align-items: center;
    padding-top: 4px;
    line-height: 18px;
}
.big svg {
    width: 32px;
    height: 34px;
}
.big .arrow {
    margin: 1px 0 0;
}
.fx {
    height: 34px;
    font: italic bold 36px/28px "Liberation Serif", serif;
}
.fx sub {
    font-size: 24px;
    font-weight: normal;
    line-height: 0;
    vertical-align: -6px;
}
.stack {
    padding-left: 7px;
}
.small {
    display: flex;
    align-items: center;
    height: 24px;
}
.small svg {
    width: 16px;
    height: 16px;
    margin-right: 5px;
}
.small:disabled {
    color: #b4b4b4;
}
.ersatz {
    position: relative;
    padding: 1px 2px 0 3px;
}
.split {
    height: 72px;
    border: 1px solid #0a64c0;
    background: linear-gradient(#d2ebf8, #c3e7f6);
    display: flex;
    flex-direction: column;
    align-items: center;
}
.split svg {
    flex: none;
    width: 32px;
    height: 36px;
}
.split span {
    position: relative;
    align-self: stretch;
    flex: 1;
    line-height: 15px;
    border-top: 1px solid #0a64c0;
    background: linear-gradient(#b2d0ec, #c6dcf4);
}
.split .arrow {
    position: absolute;
    right: 2px;
    bottom: 15px;
}

/* Menü */
.menu {
    position: absolute;
    z-index: 2;
    left: 3px;
    top: 72px;
    width: 308px;
    padding: 1px;
    display: flex;
    flex-direction: column;
    background: #fff;
    border: 1px solid #6a6a6a;
}
.menu button {
    display: flex;
    align-items: center;
    height: 38px;
    margin: 1px 0;
    padding-left: 3px;
    border: 1px solid transparent;
}
.menu svg {
    flex: none;
    width: 32px;
    height: 32px;
    margin-right: 2px;
}
.menu hr {
    align-self: stretch;
    height: 1px;
    margin: 2px 0;
    border: none;
    background: #9c9c9c;
}
.menu .active {
    border-color: #0a64c0;
    background: linear-gradient(#d0eaf8, #c2e6f5);
}
.az {
    font: bold 17px "Liberation Sans", sans-serif;
    fill: #30343a;
}

main {
    flex: 1;
    display: flex;
    min-height: 0;
}

/* Modellbrowser */
.browser {
    flex: none;
    width: 331px;
    display: flex;
    flex-direction: column;
    padding-right: 3px;
    border-right: 2px solid #7a7a7a;
}
.grip {
    display: flex;
    align-items: center;
    height: 16px;
}
.grip span {
    flex: 1;
    height: 5px;
    border: 1px solid #a8a8a8;
    border-left: none;
}
.grip button {
    width: 14px;
    display: flex;
    justify-content: center;
}
.grip svg {
    width: 6px;
    height: 6px;
}
.browser-head {
    display: flex;
    justify-content: space-between;
    align-items: center;
    height: 20px;
    padding: 0 4px 0 3px;
    background: #ababab;
    color: #fff;
    font-size: 12px;
    font-weight: bold;
}
.browser-head .arrow {
    margin-left: 4px;
    border-top-color: #fff;
}
.browser-head button {
    width: 13px;
    height: 13px;
    line-height: 12px;
    background: #ffffe0;
    color: #00007a;
    outline: 1px solid #222;
}
.browser-tools {
    display: flex;
    align-items: center;
    height: 28px;
    font-family: "Liberation Sans", sans-serif;
    font-size: 12px;
    color: #000;
}
.browser-tools svg {
    width: 16px;
    height: 16px;
}
.view {
    display: flex;
    align-items: center;
    margin-left: 5px;
    padding: 0 7px 0 13px;
    border-left: 1px solid #8c8c8c;
}
.view svg {
    margin-right: 3px;
}
.view .arrow {
    margin-left: 11px;
}
.tree {
    flex: 1;
    margin: 0;
    padding: 0;
    list-style: none;
    overflow: hidden;
    background: #fff;
    border: 1px solid #555;
    border-left: none;
    color: #000;
}
.tree li {
    position: relative;
    display: flex;
    align-items: center;
    height: 18px;
    padding-left: 20px;
    white-space: nowrap;
    /* senkrechte und waagerechte Verbindungslinie */
    background:
        linear-gradient(#888, #888) 4px 0 / 1px 100% no-repeat,
        linear-gradient(#888, #888) 4px 9px / 12px 1px no-repeat;
}
.tree li:last-child {
    background:
        linear-gradient(#888, #888) 4px 0 / 1px 9px no-repeat,
        linear-gradient(#888, #888) 4px 9px / 12px 1px no-repeat;
}
.tree li::before {
    content: "";
    position: absolute;
    left: 0;
    top: 5px;
    width: 9px;
    height: 9px;
    border: 1px solid #888;
    background:
        linear-gradient(#000, #000) 1px 3px / 5px 1px no-repeat,
        linear-gradient(#000, #000) 3px 1px / 1px 5px no-repeat,
        #fff;
}
.tree svg {
    flex: none;
    width: 16px;
    height: 16px;
    margin-right: 2px;
}
.tree .root {
    padding-left: 1px;
    background: none;
    font-family: "Liberation Sans", sans-serif;
    font-size: 12px;
    font-weight: bold;
}
.tree .root::before {
    display: none;
}
.tree .root svg {
    margin-right: 3px;
}

/* Ansichtsfenster */
.viewport {
    flex: 1;
    position: relative;
    overflow: hidden;
    background: linear-gradient(#346297, #5f82a8 50%, #98a4b3);
    border-top: 1px solid #55585e;
}
.scene {
    position: absolute;
    left: 0;
    top: 0;
    width: 1038px;
    height: 573px;
    shape-rendering: crispEdges;
}
.viewcube {
    position: absolute;
    left: 18px;
    top: 22px;
    width: 90px;
    height: 90px;
}
.viewcube .shade {
    filter: blur(5px);
}
.viewcube text {
    font: bold 9px "Open Sans", sans-serif;
    fill: #53657c;
}
.navbar {
    position: absolute;
    left: 1px;
    top: 120px;
    width: 34px;
    height: 199px;
    border: 2px solid #45688f;
    border-radius: 5px;
    background: #829ab4;
}
.navbar svg {
    display: block;
    width: 32px;
    height: 196px;
}

/* Tooltip */
.tooltip {
    position: absolute;
    z-index: 3;
    left: 1199px;
    top: 339px;
    right: 0;
    height: 159px;
    padding: 6px 0 0 6px;
    overflow: hidden;
    line-height: 15px;
    white-space: nowrap;
    color: #4a4a4a;
    background: #efefef;
    border: 1px solid #7a7a7a;
    border-right: none;
}
.tooltip h2 {
    margin: 0 0 6px;
    font-size: 11px;
    line-height: 15px;
}
.tooltip p {
    margin: 0 0 18px;
}
.tooltip footer {
    margin: -8px 0 0 -6px;
    padding: 6px;
    font-weight: bold;
    border-top: 1px solid #b4b4b4;
}

/* Markierungen */
.marks {
    position: absolute;
    z-index: 4;
    left: 0;
    top: 0;
    width: 1368px;
    height: 666px;
    pointer-events: none;
    filter: drop-shadow(2px 3px 2px rgba(0, 0, 0, 0.4));
}
.question {
    position: absolute;
    z-index: 4;
    left: 1229px;
    top: 296px;
    width: 33px;
    height: 38px;
    border: 2px solid #f00;
    font: 46px/36px "Liberation Sans", sans-serif;
    text-align: center;
    color: #f00;
    box-shadow: 2px 3px 3px rgba(0, 0, 0, 0.35);
    text-shadow: 2px 2px 2px rgba(0, 0, 0, 0.4);
}
```
